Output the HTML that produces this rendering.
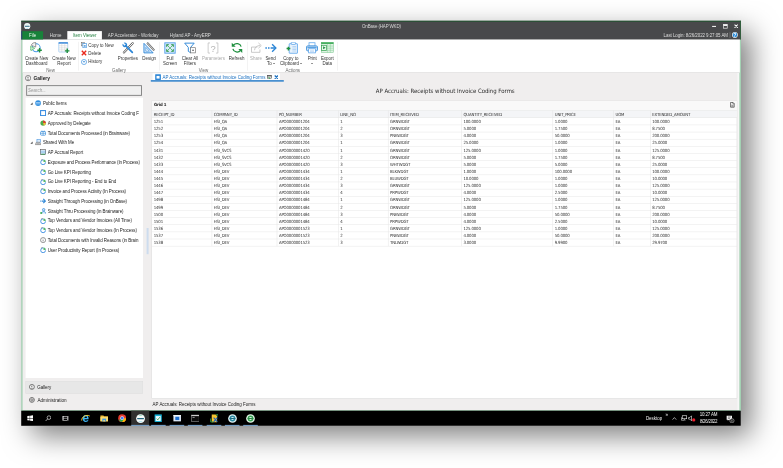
<!DOCTYPE html>
<html lang="en"><head><meta charset="utf-8"><title>OnBase (HAP WKD)</title>
<style>
html,body{margin:0;padding:0;}
body{width:783px;height:468px;background:#fff;overflow:hidden;position:relative;font-family:"Liberation Sans",sans-serif;}
div,svg{position:absolute;box-sizing:border-box;}
.t{white-space:nowrap;}
</style></head><body>

<div style="left:21px;top:21px;width:720px;height:405px;background:#f0eeee;box-shadow:9.5px 9.5px 27px rgba(0,0,0,.52);"></div>
<svg style="left:0;top:0" width="783" height="468" viewBox="0 0 783 468"><rect x="21.70" y="21.30" width="718.60" height="389.20" fill="#f0eeee" stroke="#a9d2b6" stroke-width="1.0"/><rect x="21.20" y="20.80" width="1.40" height="389.90" fill="#aed4bb"/><rect x="737.50" y="72.80" width="2.00" height="337.30" fill="#f7f7f7"/><rect x="739.45" y="20.80" width="1.35" height="389.90" fill="#9fd0b0"/><rect x="22.70" y="38.00" width="717.10" height="34.70" fill="#fff"/><rect x="22.70" y="72.30" width="717.10" height="0.50" fill="#d2d2d2"/><rect x="21.20" y="20.80" width="719.60" height="18.65" fill="#48494b"/><rect x="21.20" y="20.80" width="719.60" height="0.90" fill="#22552f"/><rect x="740.00" y="20.80" width="0.80" height="18.65" fill="#2a5c36"/><rect x="22.20" y="31.20" width="20.85" height="8.25" fill="#18823a"/><rect x="21.20" y="31.20" width="1.00" height="8.25" fill="#2b4a78"/><rect x="67.30" y="31.10" width="34.60" height="8.60" fill="#fff"/><rect x="729.70" y="32.20" width="0.60" height="5.70" fill="#8c8c8c"/><rect x="712.10" y="25.90" width="3.90" height="1.00" fill="#fff"/><rect x="78.45" y="41.80" width="0.50" height="28.80" fill="#e6e6e6"/><rect x="159.35" y="41.80" width="0.50" height="28.80" fill="#e6e6e6"/><rect x="247.25" y="41.80" width="0.50" height="28.80" fill="#e6e6e6"/><rect x="337.05" y="41.80" width="0.50" height="28.80" fill="#e6e6e6"/><rect x="26.65" y="85.65" width="114.80" height="9.70" fill="#f0f0f0" stroke="#7d7d7d" stroke-width="0.9"/><rect x="25.60" y="97.70" width="117.40" height="280.30" fill="#fff"/><rect x="146.60" y="228.00" width="2.00" height="26.20" fill="#cddcee"/><rect x="25.75" y="381.45" width="117.00" height="12.00" fill="#e7e7e7" stroke="#dcdcdc" stroke-width="0.5"/><rect x="152.60" y="73.40" width="127.40" height="7.00" fill="#fff"/><rect x="150.80" y="80.20" width="133.00" height="1.40" fill="#1f78c8"/><rect x="151.75" y="100.85" width="585.20" height="297.50" fill="#fff" stroke="#d9d9d9" stroke-width="0.5"/><rect x="151.80" y="100.90" width="585.10" height="9.50" fill="#f9f9f9"/><rect x="151.80" y="110.40" width="585.10" height="7.30" fill="#f4f5f7"/><rect x="151.80" y="110.20" width="585.10" height="0.40" fill="#e2e2e2"/><rect x="151.80" y="117.50" width="585.10" height="0.40" fill="#dedede"/><rect x="211.65" y="110.40" width="0.50" height="135.74" fill="#e4e4e4"/><rect x="276.75" y="110.40" width="0.50" height="135.74" fill="#e4e4e4"/><rect x="338.15" y="110.40" width="0.50" height="135.74" fill="#e4e4e4"/><rect x="387.95" y="110.40" width="0.50" height="135.74" fill="#e4e4e4"/><rect x="461.25" y="110.40" width="0.50" height="135.74" fill="#e4e4e4"/><rect x="552.55" y="110.40" width="0.50" height="135.74" fill="#e4e4e4"/><rect x="613.35" y="110.40" width="0.50" height="135.74" fill="#e4e4e4"/><rect x="650.05" y="110.40" width="0.50" height="135.74" fill="#e4e4e4"/><rect x="151.80" y="124.68" width="585.10" height="0.50" fill="#e6e6e6"/><rect x="151.80" y="131.81" width="585.10" height="0.50" fill="#e6e6e6"/><rect x="151.80" y="138.94" width="585.10" height="0.50" fill="#e6e6e6"/><rect x="151.80" y="146.07" width="585.10" height="0.50" fill="#e6e6e6"/><rect x="151.80" y="153.20" width="585.10" height="0.50" fill="#e6e6e6"/><rect x="151.80" y="160.33" width="585.10" height="0.50" fill="#e6e6e6"/><rect x="151.80" y="167.46" width="585.10" height="0.50" fill="#e6e6e6"/><rect x="151.80" y="174.59" width="585.10" height="0.50" fill="#e6e6e6"/><rect x="151.80" y="181.72" width="585.10" height="0.50" fill="#e6e6e6"/><rect x="151.80" y="188.85" width="585.10" height="0.50" fill="#e6e6e6"/><rect x="151.80" y="195.98" width="585.10" height="0.50" fill="#e6e6e6"/><rect x="151.80" y="203.11" width="585.10" height="0.50" fill="#e6e6e6"/><rect x="151.80" y="210.24" width="585.10" height="0.50" fill="#e6e6e6"/><rect x="151.80" y="217.37" width="585.10" height="0.50" fill="#e6e6e6"/><rect x="151.80" y="224.50" width="585.10" height="0.50" fill="#e6e6e6"/><rect x="151.80" y="231.63" width="585.10" height="0.50" fill="#e6e6e6"/><rect x="151.80" y="238.76" width="585.10" height="0.50" fill="#e6e6e6"/><rect x="151.80" y="245.89" width="585.10" height="0.50" fill="#e6e6e6"/><rect x="21.20" y="410.70" width="719.60" height="15.10" fill="#000"/><rect x="131.20" y="410.70" width="18.00" height="15.10" fill="#303030"/><rect x="131.20" y="424.90" width="18.00" height="0.90" fill="#86b7e6"/><rect x="151.10" y="424.90" width="14.60" height="0.90" fill="#86b7e6"/><rect x="169.60" y="424.90" width="14.60" height="0.90" fill="#86b7e6"/><rect x="187.80" y="424.90" width="14.60" height="0.90" fill="#86b7e6"/><rect x="206.70" y="424.90" width="14.60" height="0.90" fill="#86b7e6"/><rect x="224.90" y="424.90" width="14.60" height="0.90" fill="#86b7e6"/><rect x="243.20" y="424.90" width="14.60" height="0.90" fill="#86b7e6"/></svg>
<div id="fg" style="left:0;top:0;width:783px;height:468px;will-change:transform;">
<svg style="left:24.20px;top:23.10px;" width="6.40" height="6.40" viewBox="0 0 20 20"><circle cx="10" cy="10" r="9.700" fill="#f6fbfb"/><path d="M5 4.200a7.500 7.500 0 0 1 10 0z" fill="#9fdcc0"/><path d="M5 15.800a7.500 7.500 0 0 0 10 0z" fill="#9fdde8"/><rect x="2.500" y="8.600" width="15" height="2.900" rx="0.800" fill="#25657e"/></svg>
<div class="t " style="top:33px;font-size:4.45px;line-height:5px;color:#e9f4ec;left:-67.40px;width:200px;text-align:center;">File</div>
<div class="t " style="top:33px;font-size:4.45px;line-height:5px;color:#dcdcdc;left:-44.40px;width:200px;text-align:center;">Home</div>
<div class="t " style="top:33px;font-size:4.45px;line-height:5px;color:#1e7e3c;left:-15.20px;width:200px;text-align:center;">Item Viewer</div>
<div class="t " style="top:33px;font-size:4.45px;line-height:5px;color:#dcdcdc;letter-spacing:-0.004px;left:107.80px;">AP Accelerator - Workday</div>
<div class="t " style="top:33px;font-size:4.45px;line-height:5px;color:#dcdcdc;left:169.70px;">Hyland AP - AnyERP</div>
<div class="t " style="top:24px;font-size:4.45px;line-height:5px;color:#d6d6d6;letter-spacing:-0.123px;left:362.00px;">OnBase (HAP WKD)</div>
<div class="t " style="top:33px;font-size:4.45px;line-height:5px;color:#dedede;letter-spacing:-0.064px;left:663.60px;">Last Login: 8/26/2022 9:27:05 AM</div>
<svg style="left:731.90px;top:32.30px;" width="5.80" height="5.80" viewBox="0 0 16 16"><circle cx="8" cy="8" r="7.800" fill="#fff"/><circle cx="8" cy="8" r="6.300" fill="#1f86d8"/><text x="8" y="12.800" font-size="14" font-weight="bold" fill="#fff" text-anchor="middle" font-family="Liberation Sans,sans-serif">?</text></svg>
<svg style="left:723.10px;top:24.10px;" width="4.70" height="4.60" viewBox="0 0 12 12"><rect x="1" y="1" width="10" height="10" fill="none" stroke="#e8e8e8" stroke-width="1.800"/><rect x="1" y="1" width="10" height="4" fill="#fff"/></svg>
<svg style="left:733.90px;top:24.10px;" width="4.40" height="4.40" viewBox="0 0 12 12"><path d="M1.500 1.500 10.500 10.500M10.500 1.500 1.500 10.500" stroke="#fff" stroke-width="2.800"/></svg>
<div class="t " style="top:56px;font-size:4.45px;line-height:5px;color:#333;left:-63.40px;width:200px;text-align:center;">Create New</div>
<div class="t " style="top:61px;font-size:4.45px;line-height:5px;color:#333;left:-63.40px;width:200px;text-align:center;">Dashboard</div>
<div class="t " style="top:56px;font-size:4.45px;line-height:5px;color:#333;left:-36.00px;width:200px;text-align:center;">Create New</div>
<div class="t " style="top:61px;font-size:4.45px;line-height:5px;color:#333;left:-36.00px;width:200px;text-align:center;">Report</div>
<div class="t " style="top:68px;font-size:4.45px;line-height:5px;color:#6a6a6a;left:-49.40px;width:200px;text-align:center;">New</div>
<div class="t " style="top:43px;font-size:4.45px;line-height:5px;color:#333;left:88.30px;">Copy to New</div>
<div class="t " style="top:51px;font-size:4.45px;line-height:5px;color:#333;left:88.30px;">Delete</div>
<div class="t " style="top:59px;font-size:4.45px;line-height:5px;color:#333;left:88.30px;">History</div>
<div class="t " style="top:56px;font-size:4.45px;line-height:5px;color:#333;left:27.90px;width:200px;text-align:center;">Properties</div>
<div class="t " style="top:56px;font-size:4.45px;line-height:5px;color:#333;left:49.20px;width:200px;text-align:center;">Design</div>
<div class="t " style="top:68px;font-size:4.45px;line-height:5px;color:#6a6a6a;left:19.00px;width:200px;text-align:center;">Gallery</div>
<div class="t " style="top:56px;font-size:4.45px;line-height:5px;color:#333;left:70.00px;width:200px;text-align:center;">Full</div>
<div class="t " style="top:61px;font-size:4.45px;line-height:5px;color:#333;left:70.00px;width:200px;text-align:center;">Screen</div>
<div class="t " style="top:56px;font-size:4.45px;line-height:5px;color:#333;left:89.90px;width:200px;text-align:center;">Clear All</div>
<div class="t " style="top:61px;font-size:4.45px;line-height:5px;color:#333;left:89.90px;width:200px;text-align:center;">Filters</div>
<div class="t " style="top:56px;font-size:4.45px;line-height:5px;color:#a9a9a9;left:113.40px;width:200px;text-align:center;">Parameters</div>
<div class="t " style="top:56px;font-size:4.45px;line-height:5px;color:#333;left:136.60px;width:200px;text-align:center;">Refresh</div>
<div class="t " style="top:68px;font-size:4.45px;line-height:5px;color:#6a6a6a;left:103.50px;width:200px;text-align:center;">View</div>
<div class="t " style="top:56px;font-size:4.45px;line-height:5px;color:#a9a9a9;left:156.00px;width:200px;text-align:center;">Share</div>
<div class="t " style="top:56px;font-size:4.45px;line-height:5px;color:#333;left:170.60px;width:200px;text-align:center;">Send</div>
<div class="t " style="top:61px;font-size:4.45px;line-height:5px;color:#333;left:169.30px;width:200px;text-align:center;">To</div>
<svg style="left:272.55px;top:63.00px;" width="2.00" height="1.30" viewBox="0 0 8 5"><path d="M0 0h8L4 5z" fill="#555"/></svg>
<div class="t " style="top:56px;font-size:4.45px;line-height:5px;color:#333;left:190.80px;width:200px;text-align:center;">Copy to</div>
<div class="t " style="top:61px;font-size:4.45px;line-height:5px;color:#333;left:189.50px;width:200px;text-align:center;">Clipboard</div>
<svg style="left:299.92px;top:63.00px;" width="2.00" height="1.30" viewBox="0 0 8 5"><path d="M0 0h8L4 5z" fill="#555"/></svg>
<div class="t " style="top:56px;font-size:4.45px;line-height:5px;color:#333;left:212.20px;width:200px;text-align:center;">Print</div>
<svg style="left:311.20px;top:63.00px;" width="2.00" height="1.30" viewBox="0 0 8 5"><path d="M0 0h8L4 5z" fill="#555"/></svg>
<div class="t " style="top:56px;font-size:4.45px;line-height:5px;color:#333;left:227.30px;width:200px;text-align:center;">Export</div>
<div class="t " style="top:61px;font-size:4.45px;line-height:5px;color:#333;left:227.30px;width:200px;text-align:center;">Data</div>
<div class="t " style="top:68px;font-size:4.45px;line-height:5px;color:#6a6a6a;left:192.80px;width:200px;text-align:center;">Actions</div>
<svg style="left:30.30px;top:42.20px;" width="12.00" height="12.00" viewBox="0 0 32 32"><circle cx="16.500" cy="15.500" r="10.600" fill="#fff" stroke="#4a9ae6" stroke-width="2.800"/><path d="M15.200 13.500V1.200A12.500 12.500 0 0 0 3 8.500z" fill="#f3f3f3" stroke="#6a6a6a" stroke-width="1.700" stroke-linejoin="round"/><path d="M13 16.500 1.200 11.500A12.500 12.500 0 0 0 2.600 23z" fill="#bfe8c6" stroke="#4bb165" stroke-width="1.600" stroke-linejoin="round"/><path d="M25.6 16v12M19.6 22h12" stroke="#1f8f3f" stroke-width="3.8"/></svg>
<svg style="left:58.00px;top:42.20px;" width="12.00" height="12.00" viewBox="0 0 32 32"><rect x="2" y="1.2" width="24" height="25.5" rx="1.5" fill="#fff" stroke="#8fc1f0" stroke-width="1.7"/><rect x="1.6" y="0.8" width="24.8" height="3.6" fill="#2b7fd6"/><path d="M10 4.4v22M18 4.4v22M2 10h24M2 15.500h24M2 21h24" stroke="#c9c9c9" stroke-width="1.1"/><path d="M24.6 17.6v12M18.6 23.6h12" stroke="#1f8f3f" stroke-width="3.8"/></svg>
<svg style="left:81.00px;top:42.30px;" width="6.00" height="6.00" viewBox="0 0 16 16"><rect x="0.8" y="0.8" width="8.5" height="9.500" fill="#fff" stroke="#5a5a5a" stroke-width="1.3"/><path d="M2.500 3.500h5M2.500 6h3" stroke="#777" stroke-width="1"/><rect x="5" y="4.500" width="10" height="10.800" fill="#fff" stroke="#3a8fe0" stroke-width="1.6"/><rect x="7.400" y="8.800" width="5" height="3.400" fill="#2b85d6"/></svg>
<svg style="left:81.00px;top:50.40px;" width="6.00" height="6.00" viewBox="0 0 16 16"><path d="M2.200 2.200 13.800 13.800M13.800 2.200 2.200 13.800" stroke="#ea2a1e" stroke-width="3.800"/></svg>
<svg style="left:81.00px;top:58.60px;" width="6.00" height="6.00" viewBox="0 0 16 16"><circle cx="8" cy="8" r="6.800" fill="#fff" stroke="#3a8fe0" stroke-width="1.800"/><path d="M4.800 6h6.400L8 10.200z" fill="#2b85d6"/></svg>
<svg style="left:121.90px;top:42.20px;" width="12.00" height="12.00" viewBox="0 0 32 32"><path d="M28.500 3.500 5 28" stroke="#5a5a5a" stroke-width="5.400" stroke-linecap="round"/><path d="M28.500 3.500 5 28" stroke="#fff" stroke-width="2.600" stroke-linecap="round"/><path d="M9 9 27.500 27.500" stroke="#2b85d6" stroke-width="4.600" stroke-linecap="round"/><circle cx="7.500" cy="7.500" r="4.600" fill="none" stroke="#2b85d6" stroke-width="3.400"/><path d="M6.500 6.500 1 1" stroke="#fff" stroke-width="3.400"/></svg>
<svg style="left:143.20px;top:42.20px;" width="12.00" height="12.00" viewBox="0 0 32 32"><path d="M2.500 29V3.500L27 29z" fill="#d4e8fa" stroke="#2b85d6" stroke-width="2.400" stroke-linejoin="round"/><path d="M7.500 24.500v-10l9.500 10z" fill="#fff" stroke="#2b85d6" stroke-width="1.600"/><path d="M11 2 30 22.500" stroke="#6a6a6a" stroke-width="5.200"/><path d="M11.500 2.500 29.500 22" stroke="#e9e9e9" stroke-width="2.400"/><path d="M11.500 2.500 29.500 22" stroke="#8a8a8a" stroke-width="0.800"/></svg>
<svg style="left:164.00px;top:42.20px;" width="12.00" height="12.00" viewBox="0 0 32 32"><rect x="2.200" y="2.200" width="27.600" height="27.600" fill="#dcecfb" stroke="#5aa3ea" stroke-width="2.600"/><path d="M6 6h8l-8 8z" fill="#1f8f3f"/><path d="M8.5 8.5l7 7" stroke="#5cb774" stroke-width="2.600"/><path d="M26 6h-8l8 8z" fill="#1f8f3f"/><path d="M23.5 8.5l-7 7" stroke="#5cb774" stroke-width="2.600"/><path d="M6 26h8l-8 -8z" fill="#1f8f3f"/><path d="M8.5 23.5l7 -7" stroke="#5cb774" stroke-width="2.600"/><path d="M26 26h-8l8 -8z" fill="#1f8f3f"/><path d="M23.5 23.5l-7 -7" stroke="#5cb774" stroke-width="2.600"/></svg>
<svg style="left:183.90px;top:42.20px;" width="12.00" height="12.00" viewBox="0 0 32 32"><path d="M1.800 3h25.400L17.500 14.500v14l-6-3.600V14.500z" fill="#fff" stroke="#2b85d6" stroke-width="2.500" stroke-linejoin="round"/><rect x="17" y="15.200" width="14" height="13.800" fill="#fff" stroke="#6a6a6a" stroke-width="1.700"/><rect x="22.300" y="20.400" width="3.600" height="3.600" fill="#555"/></svg>
<svg style="left:207.40px;top:42.20px;" width="12.00" height="12.00" viewBox="0 0 32 32"><path d="M8 2.500H3v27h5M24 2.500h5v27h-5" fill="none" stroke="#bdbdbd" stroke-width="2"/><text x="16" y="25.500" font-size="25" fill="#b4b4b4" text-anchor="middle" font-family="Liberation Sans,sans-serif">?</text></svg>
<svg style="left:230.70px;top:42.20px;" width="12.00" height="12.00" viewBox="0 0 32 32"><path d="M27 12.500A11.500 10.500 0 0 0 6.500 8.500" fill="none" stroke="#1f8f3f" stroke-width="3.400"/><path d="M5 18.500A11.500 10.500 0 0 0 25.500 22.500" fill="none" stroke="#1f8f3f" stroke-width="3.400"/><path d="M2 2v10.500h10.500z" fill="#1f8f3f"/><path d="M30 29V18.500H19.500z" fill="#1f8f3f"/></svg>
<svg style="left:250.00px;top:42.20px;" width="12.00" height="12.00" viewBox="0 0 32 32"><path d="M19.500 13.500H4v14h22.500V20" fill="none" stroke="#bcbcbc" stroke-width="2.100"/><path d="M12 22c1-9 7-12.500 15-12.500" fill="none" stroke="#bcbcbc" stroke-width="2.100"/><path d="M22.500 2.500l7.500 7-7.500 7" fill="none" stroke="#bcbcbc" stroke-width="2.100"/></svg>
<svg style="left:264.60px;top:42.20px;" width="12.00" height="12.00" viewBox="0 0 32 32"><path d="M1 16h4M8 16h4M15 16h14" stroke="#2b85d6" stroke-width="3.400"/><path d="M19 6l10 10-10 10" fill="none" stroke="#2b85d6" stroke-width="3.600"/></svg>
<svg style="left:285.60px;top:42.20px;" width="12.00" height="12.00" viewBox="0 0 32 32"><rect x="8.500" y="4.500" width="22" height="25.500" rx="1" fill="#e8f2fc" stroke="#5aa3ea" stroke-width="2.200"/><rect x="14" y="0.500" width="11" height="6" rx="1.500" fill="#fff" stroke="#5aa3ea" stroke-width="2"/><path d="M17 12h10M17 16h10M17 20h10M17 24h10" stroke="#7fb6ee" stroke-width="1.300"/><path d="M6.5 12.5v10M1.5 17.5h10" stroke="#1f8f3f" stroke-width="3.8"/></svg>
<svg style="left:306.20px;top:42.20px;" width="12.00" height="12.00" viewBox="0 0 32 32"><rect x="8" y="2" width="16" height="9" fill="#fff" stroke="#5aa3ea" stroke-width="2"/><rect x="1.500" y="10.500" width="29" height="13" rx="2.500" fill="#cfe3f8" stroke="#2b85d6" stroke-width="2.200"/><rect x="7" y="18" width="18" height="11" fill="#fff" stroke="#5aa3ea" stroke-width="2"/><path d="M10.500 22h11M10.500 25.500h11" stroke="#7fb6ee" stroke-width="1.200"/><path d="M4 14.500h24" stroke="#2b85d6" stroke-width="2"/></svg>
<svg style="left:321.40px;top:42.20px;" width="12.40" height="12.40" viewBox="0 0 32 32"><rect x="0.800" y="1.500" width="31" height="25.500" fill="#dff3e3" stroke="#7cc890" stroke-width="1.400"/><rect x="0.400" y="1" width="31.800" height="3.800" fill="#2ea34b"/><path d="M16.500 5v22M24 5v22M1 10.500h31M1 16h31M1 21.500h31" stroke="#7cc890" stroke-width="1.200"/><rect x="1.500" y="8.500" width="12.500" height="13" fill="#e9f7ec" stroke="#2f9c4c" stroke-width="1.700"/><path d="M5.500 11v8l6.500-4z" fill="#1f8f3f"/></svg>
<svg style="left:25.30px;top:75.40px;" width="6.20" height="6.20" viewBox="0 0 16 16"><circle cx="8" cy="8" r="6.8" fill="#f6f6f6" stroke="#555" stroke-width="1.7"/><path d="M8 4v5M6 12h4M6.500 7H8" stroke="#444" stroke-width="1.5" fill="none"/></svg>
<div class="t " style="top:76px;font-size:4.9px;line-height:5px;color:#222;font-weight:bold;left:33.40px;">Gallery</div>
<div class="t " style="top:88px;font-size:4.45px;line-height:5px;color:#999;font-style:italic;left:28.10px;">Search...</div>
<div style="left:0;top:0;width:140.2px;height:380px;overflow:hidden">
<svg style="left:29.50px;top:101.85px;" width="3.00" height="3.00" viewBox="0 0 8 8"><path d="M7 1v6H1z" fill="#444"/></svg>
<svg style="left:34.80px;top:100.35px;" width="6.20" height="6.20" viewBox="0 0 16 16"><circle cx="8" cy="8" r="7.5" fill="#2f8ee0"/><path d="M2 6.500h12M2 10h12" stroke="#cfe6fa" stroke-width="1.6"/></svg>
<div class="t " style="top:101px;font-size:4.45px;line-height:5px;color:#222;letter-spacing:-0.04px;left:42.90px;">Public Items</div>
<svg style="left:39.70px;top:110.30px;" width="6.20" height="6.20" viewBox="0 0 16 16"><rect x="1.500" y="1.500" width="13" height="13" fill="#fff" stroke="#3a8de2" stroke-width="2.8"/></svg>
<div class="t " style="top:111px;font-size:4.45px;line-height:5px;color:#222;letter-spacing:-0.045px;left:47.70px;">AP Accruals: Receipts without Invoice Coding F</div>
<svg style="left:39.70px;top:120.05px;" width="6.20" height="6.20" viewBox="0 0 16 16"><circle cx="8" cy="8" r="7" fill="#4aa84f"/><path d="M8 8V1a7 7 0 0 1 7 7z" fill="#e23c2e"/><path d="M8 8h7a7 7 0 0 1-5 6.700z" fill="#f2c035"/><path d="M8 8 3 3" stroke="#6b4" stroke-width="1"/></svg>
<div class="t " style="top:121px;font-size:4.45px;line-height:5px;color:#222;letter-spacing:-0.045px;left:47.70px;">Approved by Delegate</div>
<svg style="left:39.70px;top:129.81px;" width="6.20" height="6.20" viewBox="0 0 16 16"><rect x="1.500" y="4" width="13" height="9.500" rx="2" fill="#fff" stroke="#2b85d6" stroke-width="1.8"/><path d="M1.500 8.500h13M8 4v9.500M5 1.500v3M11 1.500v3" stroke="#2b85d6" stroke-width="1.5"/></svg>
<div class="t " style="top:131px;font-size:4.45px;line-height:5px;color:#222;letter-spacing:-0.045px;left:47.70px;">Total Documents Processed (in Brainware)</div>
<svg style="left:29.50px;top:140.86px;" width="3.00" height="3.00" viewBox="0 0 8 8"><path d="M7 1v6H1z" fill="#444"/></svg>
<svg style="left:34.80px;top:139.36px;" width="6.20" height="6.20" viewBox="0 0 16 16"><rect x="5" y="1" width="9" height="7.500" fill="#dcebfa" stroke="#4a96e0" stroke-width="1.500"/><path d="M1 14.500l2.500-6h9l2.500 6z" fill="#f2f2f2" stroke="#555" stroke-width="1.400"/><path d="M4 12h8" stroke="#555" stroke-width="1.200"/></svg>
<div class="t " style="top:140px;font-size:4.45px;line-height:5px;color:#222;letter-spacing:-0.04px;left:42.90px;">Shared With Me</div>
<svg style="left:39.70px;top:149.31px;" width="6.20" height="6.20" viewBox="0 0 16 16"><rect x="1.500" y="1.500" width="13" height="13" fill="#fff" stroke="#555" stroke-width="1.6"/><path d="M1.500 5.500h13M1.500 10h13" stroke="#2b85d6" stroke-width="1.6"/><path d="M3 13.500h10" stroke="#2a9a48" stroke-width="2"/></svg>
<div class="t " style="top:150px;font-size:4.45px;line-height:5px;color:#222;letter-spacing:-0.045px;left:47.70px;">AP Accrual Report</div>
<svg style="left:39.70px;top:159.06px;" width="6.20" height="6.20" viewBox="0 0 16 16"><circle cx="8" cy="8.500" r="6.200" fill="#fff" stroke="#3a8de2" stroke-width="2.300"/><path d="M8.600 8V1.200A6.800 6.800 0 0 1 15.400 8z" fill="#3fae55" stroke="#fff" stroke-width="0.900"/><path d="M2.600 3.400A7.500 7.500 0 0 1 7 1" stroke="#777" stroke-width="1.700" fill="none"/></svg>
<div class="t " style="top:160px;font-size:4.45px;line-height:5px;color:#222;letter-spacing:-0.095px;left:47.70px;">Exposure and Process Performance (In Process)</div>
<svg style="left:39.70px;top:168.81px;" width="6.20" height="6.20" viewBox="0 0 16 16"><circle cx="8" cy="8.500" r="6.200" fill="#fff" stroke="#3a8de2" stroke-width="2.300"/><path d="M8.600 8V1.200A6.800 6.800 0 0 1 15.400 8z" fill="#3fae55" stroke="#fff" stroke-width="0.900"/><path d="M2.600 3.400A7.500 7.500 0 0 1 7 1" stroke="#777" stroke-width="1.700" fill="none"/></svg>
<div class="t " style="top:170px;font-size:4.45px;line-height:5px;color:#222;letter-spacing:-0.045px;left:47.70px;">Go Live KPI Reporting</div>
<svg style="left:39.70px;top:178.57px;" width="6.20" height="6.20" viewBox="0 0 16 16"><circle cx="8" cy="8.500" r="6.200" fill="#fff" stroke="#3a8de2" stroke-width="2.300"/><path d="M8.600 8V1.200A6.800 6.800 0 0 1 15.400 8z" fill="#3fae55" stroke="#fff" stroke-width="0.900"/><path d="M2.600 3.400A7.500 7.500 0 0 1 7 1" stroke="#777" stroke-width="1.700" fill="none"/></svg>
<div class="t " style="top:179px;font-size:4.45px;line-height:5px;color:#222;letter-spacing:-0.045px;left:47.70px;">Go Live KPI Reporting - End to End</div>
<svg style="left:39.70px;top:188.32px;" width="6.20" height="6.20" viewBox="0 0 16 16"><circle cx="8" cy="8.500" r="6.200" fill="#fff" stroke="#3a8de2" stroke-width="2.300"/><path d="M8.600 8V1.200A6.800 6.800 0 0 1 15.400 8z" fill="#3fae55" stroke="#fff" stroke-width="0.900"/><path d="M2.600 3.400A7.500 7.500 0 0 1 7 1" stroke="#777" stroke-width="1.700" fill="none"/></svg>
<div class="t " style="top:189px;font-size:4.45px;line-height:5px;color:#222;letter-spacing:-0.045px;left:47.70px;">Invoice and Process Activity (In Process)</div>
<svg style="left:39.70px;top:198.07px;" width="6.20" height="6.20" viewBox="0 0 16 16"><path d="M1 8h2.500M5 8H13" stroke="#2b85d6" stroke-width="2.800"/><path d="M8.500 2.500l5.500 5.500-5.500 5.500" fill="none" stroke="#2b85d6" stroke-width="2.800"/></svg>
<div class="t " style="top:199px;font-size:4.45px;line-height:5px;color:#222;letter-spacing:-0.045px;left:47.70px;">Straight Through Processing (in OnBase)</div>
<svg style="left:39.70px;top:207.82px;" width="6.20" height="6.20" viewBox="0 0 16 16"><circle cx="9.500" cy="4.500" r="3.200" fill="#cfe4f8" stroke="#2b85d6" stroke-width="1.800"/><path d="M4.500 14.500c0-4 2-5.500 5-5.500s5 1.500 5 5.500" fill="#cfe4f8" stroke="#2b85d6" stroke-width="1.800"/><circle cx="3" cy="12.800" r="2.700" fill="#3fae55"/></svg>
<div class="t " style="top:209px;font-size:4.45px;line-height:5px;color:#222;letter-spacing:-0.045px;left:47.70px;">Straight Thru Processing (in Brainware)</div>
<svg style="left:39.70px;top:217.57px;" width="6.20" height="6.20" viewBox="0 0 16 16"><circle cx="8" cy="8.500" r="6.200" fill="#fff" stroke="#3a8de2" stroke-width="2.300"/><path d="M8.600 8V1.200A6.800 6.800 0 0 1 15.400 8z" fill="#3fae55" stroke="#fff" stroke-width="0.900"/><path d="M2.600 3.400A7.500 7.500 0 0 1 7 1" stroke="#777" stroke-width="1.700" fill="none"/></svg>
<div class="t " style="top:218px;font-size:4.45px;line-height:5px;color:#222;letter-spacing:-0.045px;left:47.70px;">Top Vendors and Vendor Invoices (All Time)</div>
<svg style="left:39.70px;top:227.33px;" width="6.20" height="6.20" viewBox="0 0 16 16"><circle cx="8" cy="8.500" r="6.200" fill="#fff" stroke="#3a8de2" stroke-width="2.300"/><path d="M8.600 8V1.200A6.800 6.800 0 0 1 15.400 8z" fill="#3fae55" stroke="#fff" stroke-width="0.900"/><path d="M2.600 3.400A7.500 7.500 0 0 1 7 1" stroke="#777" stroke-width="1.700" fill="none"/></svg>
<div class="t " style="top:228px;font-size:4.45px;line-height:5px;color:#222;letter-spacing:-0.045px;left:47.70px;">Top Vendors and Vendor Invoices (In Process)</div>
<svg style="left:39.70px;top:237.08px;" width="6.20" height="6.20" viewBox="0 0 16 16"><circle cx="8" cy="8" r="6.600" fill="#fff" stroke="#555" stroke-width="1.500"/><path d="M8 4.500v1.500M8 7.500v4" stroke="#555" stroke-width="1.600"/></svg>
<div class="t " style="top:238px;font-size:4.45px;line-height:5px;color:#222;letter-spacing:-0.045px;left:47.70px;">Total Documents with Invalid Reasons (in Brain</div>
<svg style="left:39.70px;top:246.83px;" width="6.20" height="6.20" viewBox="0 0 16 16"><circle cx="8" cy="8.500" r="6.200" fill="#fff" stroke="#3a8de2" stroke-width="2.300"/><path d="M8.600 8V1.200A6.800 6.800 0 0 1 15.400 8z" fill="#3fae55" stroke="#fff" stroke-width="0.900"/><path d="M2.600 3.400A7.500 7.500 0 0 1 7 1" stroke="#777" stroke-width="1.700" fill="none"/></svg>
<div class="t " style="top:248px;font-size:4.45px;line-height:5px;color:#222;letter-spacing:-0.045px;left:47.70px;">User Productivity Report (In Process)</div>
</div>
<svg style="left:29.20px;top:384.40px;" width="5.80" height="5.80" viewBox="0 0 16 16"><circle cx="8" cy="8" r="6.800" fill="#f4f4f4" stroke="#3c3c3c" stroke-width="1.800"/><path d="M8 4v5M6 12h4M6.500 7H8" stroke="#444" stroke-width="1.500" fill="none"/></svg>
<div class="t " style="top:385px;font-size:4.45px;line-height:5px;color:#222;left:37.20px;">Gallery</div>
<svg style="left:29.20px;top:397.20px;" width="5.80" height="5.80" viewBox="0 0 16 16"><circle cx="8" cy="8" r="6.800" fill="none" stroke="#3c3c3c" stroke-width="1.700"/><circle cx="8" cy="8" r="2.600" fill="none" stroke="#444" stroke-width="1.500"/><path d="M8 1.500v3M8 11.500v3M1.500 8h3M11.500 8h3" stroke="#444" stroke-width="1.400"/></svg>
<div class="t " style="top:398px;font-size:4.64px;line-height:5px;color:#222;left:37.40px;">Administration</div>
<svg style="left:154.50px;top:73.70px;" width="6.10" height="6.10" viewBox="0 0 16 16"><rect x="0.500" y="0.500" width="15" height="15" rx="1" fill="#2b85d6"/><rect x="4" y="5" width="8" height="7" fill="#fff"/></svg>
<div class="t " style="top:75px;font-size:4.45px;line-height:5px;color:#1a6fc0;letter-spacing:-0.007px;left:162.50px;">AP Accruals: Receipts without Invoice Coding Forms</div>
<svg style="left:266.90px;top:74.80px;" width="4.90" height="4.40" viewBox="0 0 12 11"><rect x="1" y="1" width="10" height="7" fill="#f4f4f4" stroke="#4a4a4a" stroke-width="1.500"/><rect x="1" y="1" width="10" height="2.400" fill="#4a4a4a"/><path d="M3 6.500h3.500V10" fill="none" stroke="#2a9a48" stroke-width="1.600"/></svg>
<svg style="left:273.80px;top:74.80px;" width="4.70" height="4.30" viewBox="0 0 10 10"><path d="M1.300 1.300 8.700 8.700M8.700 1.300 1.300 8.700" stroke="#1a6fc0" stroke-width="3"/></svg>
<div class="t " style="top:87px;font-size:5.97px;line-height:7px;color:#2a2a2a;font-family:'DejaVu Sans Condensed','DejaVu Sans',sans-serif;left:375.80px;">AP Accruals: Receipts without Invoice Coding Forms</div>
<div class="t " style="top:102px;font-size:4.3px;line-height:5px;color:#222;font-weight:bold;font-family:'DejaVu Sans Condensed','DejaVu Sans','Liberation Sans',sans-serif;letter-spacing:-0.14px;left:154.00px;">Grid 1</div>
<svg style="left:730.20px;top:102.20px;" width="4.80" height="5.60" viewBox="0 0 12 14"><path d="M1.500 1h6l3 3v9h-9z" fill="#fff" stroke="#333" stroke-width="1.700"/><path d="M7 1v3.500h3.500" fill="none" stroke="#333" stroke-width="1.200"/><path d="M3.500 8h5M3.500 10.500h5" stroke="#333" stroke-width="1.300"/></svg>
<div class="t " style="top:112px;font-size:4.3px;line-height:5px;color:#333;font-family:'DejaVu Sans Condensed','DejaVu Sans','Liberation Sans',sans-serif;letter-spacing:-0.14px;left:153.70px;">RECEIPT_ID</div>
<div class="t " style="top:112px;font-size:4.3px;line-height:5px;color:#333;font-family:'DejaVu Sans Condensed','DejaVu Sans','Liberation Sans',sans-serif;letter-spacing:-0.14px;left:213.80px;">COMPANY_ID</div>
<div class="t " style="top:112px;font-size:4.3px;line-height:5px;color:#333;font-family:'DejaVu Sans Condensed','DejaVu Sans','Liberation Sans',sans-serif;letter-spacing:-0.14px;left:278.90px;">PO_NUMBER</div>
<div class="t " style="top:112px;font-size:4.3px;line-height:5px;color:#333;font-family:'DejaVu Sans Condensed','DejaVu Sans','Liberation Sans',sans-serif;letter-spacing:-0.14px;left:340.30px;">LINE_NO</div>
<div class="t " style="top:112px;font-size:4.3px;line-height:5px;color:#333;font-family:'DejaVu Sans Condensed','DejaVu Sans','Liberation Sans',sans-serif;letter-spacing:-0.14px;left:390.10px;">ITEM_RECEIVED</div>
<div class="t " style="top:112px;font-size:4.3px;line-height:5px;color:#333;font-family:'DejaVu Sans Condensed','DejaVu Sans','Liberation Sans',sans-serif;letter-spacing:-0.14px;left:463.40px;">QUANTITY_RECEIVED</div>
<div class="t " style="top:112px;font-size:4.3px;line-height:5px;color:#333;font-family:'DejaVu Sans Condensed','DejaVu Sans','Liberation Sans',sans-serif;letter-spacing:-0.14px;left:554.70px;">UNIT_PRICE</div>
<div class="t " style="top:112px;font-size:4.3px;line-height:5px;color:#333;font-family:'DejaVu Sans Condensed','DejaVu Sans','Liberation Sans',sans-serif;letter-spacing:-0.14px;left:615.50px;">UOM</div>
<div class="t " style="top:112px;font-size:4.3px;line-height:5px;color:#333;font-family:'DejaVu Sans Condensed','DejaVu Sans','Liberation Sans',sans-serif;letter-spacing:-0.14px;left:652.20px;">EXTENDED_AMOUNT</div>
<div class="t " style="top:119px;font-size:4.3px;line-height:5px;color:#333;font-family:'DejaVu Sans Condensed','DejaVu Sans','Liberation Sans',sans-serif;letter-spacing:-0.14px;left:153.70px;">1251</div>
<div class="t " style="top:119px;font-size:4.3px;line-height:5px;color:#333;font-family:'DejaVu Sans Condensed','DejaVu Sans','Liberation Sans',sans-serif;letter-spacing:-0.14px;left:213.80px;">HSI_QA</div>
<div class="t " style="top:119px;font-size:4.3px;line-height:5px;color:#333;font-family:'DejaVu Sans Condensed','DejaVu Sans','Liberation Sans',sans-serif;letter-spacing:-0.14px;left:278.90px;">APO0000001204</div>
<div class="t " style="top:119px;font-size:4.3px;line-height:5px;color:#333;font-family:'DejaVu Sans Condensed','DejaVu Sans','Liberation Sans',sans-serif;letter-spacing:-0.14px;left:340.30px;">1</div>
<div class="t " style="top:119px;font-size:4.3px;line-height:5px;color:#333;font-family:'DejaVu Sans Condensed','DejaVu Sans','Liberation Sans',sans-serif;letter-spacing:-0.14px;left:390.10px;">GRNWDGT</div>
<div class="t " style="top:119px;font-size:4.3px;line-height:5px;color:#333;font-family:'DejaVu Sans Condensed','DejaVu Sans','Liberation Sans',sans-serif;letter-spacing:-0.14px;left:463.40px;">100.0000</div>
<div class="t " style="top:119px;font-size:4.3px;line-height:5px;color:#333;font-family:'DejaVu Sans Condensed','DejaVu Sans','Liberation Sans',sans-serif;letter-spacing:-0.14px;left:554.70px;">1.0000</div>
<div class="t " style="top:119px;font-size:4.3px;line-height:5px;color:#333;font-family:'DejaVu Sans Condensed','DejaVu Sans','Liberation Sans',sans-serif;letter-spacing:-0.14px;left:615.50px;">EA</div>
<div class="t " style="top:119px;font-size:4.3px;line-height:5px;color:#333;font-family:'DejaVu Sans Condensed','DejaVu Sans','Liberation Sans',sans-serif;letter-spacing:-0.14px;left:652.20px;">100.0000</div>
<div class="t " style="top:126px;font-size:4.3px;line-height:5px;color:#333;font-family:'DejaVu Sans Condensed','DejaVu Sans','Liberation Sans',sans-serif;letter-spacing:-0.14px;left:153.70px;">1252</div>
<div class="t " style="top:126px;font-size:4.3px;line-height:5px;color:#333;font-family:'DejaVu Sans Condensed','DejaVu Sans','Liberation Sans',sans-serif;letter-spacing:-0.14px;left:213.80px;">HSI_QA</div>
<div class="t " style="top:126px;font-size:4.3px;line-height:5px;color:#333;font-family:'DejaVu Sans Condensed','DejaVu Sans','Liberation Sans',sans-serif;letter-spacing:-0.14px;left:278.90px;">APO0000001204</div>
<div class="t " style="top:126px;font-size:4.3px;line-height:5px;color:#333;font-family:'DejaVu Sans Condensed','DejaVu Sans','Liberation Sans',sans-serif;letter-spacing:-0.14px;left:340.30px;">2</div>
<div class="t " style="top:126px;font-size:4.3px;line-height:5px;color:#333;font-family:'DejaVu Sans Condensed','DejaVu Sans','Liberation Sans',sans-serif;letter-spacing:-0.14px;left:390.10px;">ORNWDGT</div>
<div class="t " style="top:126px;font-size:4.3px;line-height:5px;color:#333;font-family:'DejaVu Sans Condensed','DejaVu Sans','Liberation Sans',sans-serif;letter-spacing:-0.14px;left:463.40px;">5.0000</div>
<div class="t " style="top:126px;font-size:4.3px;line-height:5px;color:#333;font-family:'DejaVu Sans Condensed','DejaVu Sans','Liberation Sans',sans-serif;letter-spacing:-0.14px;left:554.70px;">1.7500</div>
<div class="t " style="top:126px;font-size:4.3px;line-height:5px;color:#333;font-family:'DejaVu Sans Condensed','DejaVu Sans','Liberation Sans',sans-serif;letter-spacing:-0.14px;left:615.50px;">EA</div>
<div class="t " style="top:126px;font-size:4.3px;line-height:5px;color:#333;font-family:'DejaVu Sans Condensed','DejaVu Sans','Liberation Sans',sans-serif;letter-spacing:-0.14px;left:652.20px;">8.7500</div>
<div class="t " style="top:133px;font-size:4.3px;line-height:5px;color:#333;font-family:'DejaVu Sans Condensed','DejaVu Sans','Liberation Sans',sans-serif;letter-spacing:-0.14px;left:153.70px;">1253</div>
<div class="t " style="top:133px;font-size:4.3px;line-height:5px;color:#333;font-family:'DejaVu Sans Condensed','DejaVu Sans','Liberation Sans',sans-serif;letter-spacing:-0.14px;left:213.80px;">HSI_QA</div>
<div class="t " style="top:133px;font-size:4.3px;line-height:5px;color:#333;font-family:'DejaVu Sans Condensed','DejaVu Sans','Liberation Sans',sans-serif;letter-spacing:-0.14px;left:278.90px;">APO0000001204</div>
<div class="t " style="top:133px;font-size:4.3px;line-height:5px;color:#333;font-family:'DejaVu Sans Condensed','DejaVu Sans','Liberation Sans',sans-serif;letter-spacing:-0.14px;left:340.30px;">3</div>
<div class="t " style="top:133px;font-size:4.3px;line-height:5px;color:#333;font-family:'DejaVu Sans Condensed','DejaVu Sans','Liberation Sans',sans-serif;letter-spacing:-0.14px;left:390.10px;">PNKWDGT</div>
<div class="t " style="top:133px;font-size:4.3px;line-height:5px;color:#333;font-family:'DejaVu Sans Condensed','DejaVu Sans','Liberation Sans',sans-serif;letter-spacing:-0.14px;left:463.40px;">4.0000</div>
<div class="t " style="top:133px;font-size:4.3px;line-height:5px;color:#333;font-family:'DejaVu Sans Condensed','DejaVu Sans','Liberation Sans',sans-serif;letter-spacing:-0.14px;left:554.70px;">50.0000</div>
<div class="t " style="top:133px;font-size:4.3px;line-height:5px;color:#333;font-family:'DejaVu Sans Condensed','DejaVu Sans','Liberation Sans',sans-serif;letter-spacing:-0.14px;left:615.50px;">EA</div>
<div class="t " style="top:133px;font-size:4.3px;line-height:5px;color:#333;font-family:'DejaVu Sans Condensed','DejaVu Sans','Liberation Sans',sans-serif;letter-spacing:-0.14px;left:652.20px;">200.0000</div>
<div class="t " style="top:140px;font-size:4.3px;line-height:5px;color:#333;font-family:'DejaVu Sans Condensed','DejaVu Sans','Liberation Sans',sans-serif;letter-spacing:-0.14px;left:153.70px;">1254</div>
<div class="t " style="top:140px;font-size:4.3px;line-height:5px;color:#333;font-family:'DejaVu Sans Condensed','DejaVu Sans','Liberation Sans',sans-serif;letter-spacing:-0.14px;left:213.80px;">HSI_QA</div>
<div class="t " style="top:140px;font-size:4.3px;line-height:5px;color:#333;font-family:'DejaVu Sans Condensed','DejaVu Sans','Liberation Sans',sans-serif;letter-spacing:-0.14px;left:278.90px;">APO0000001204</div>
<div class="t " style="top:140px;font-size:4.3px;line-height:5px;color:#333;font-family:'DejaVu Sans Condensed','DejaVu Sans','Liberation Sans',sans-serif;letter-spacing:-0.14px;left:340.30px;">1</div>
<div class="t " style="top:140px;font-size:4.3px;line-height:5px;color:#333;font-family:'DejaVu Sans Condensed','DejaVu Sans','Liberation Sans',sans-serif;letter-spacing:-0.14px;left:390.10px;">GRNWDGT</div>
<div class="t " style="top:140px;font-size:4.3px;line-height:5px;color:#333;font-family:'DejaVu Sans Condensed','DejaVu Sans','Liberation Sans',sans-serif;letter-spacing:-0.14px;left:463.40px;">25.0000</div>
<div class="t " style="top:140px;font-size:4.3px;line-height:5px;color:#333;font-family:'DejaVu Sans Condensed','DejaVu Sans','Liberation Sans',sans-serif;letter-spacing:-0.14px;left:554.70px;">1.0000</div>
<div class="t " style="top:140px;font-size:4.3px;line-height:5px;color:#333;font-family:'DejaVu Sans Condensed','DejaVu Sans','Liberation Sans',sans-serif;letter-spacing:-0.14px;left:615.50px;">EA</div>
<div class="t " style="top:140px;font-size:4.3px;line-height:5px;color:#333;font-family:'DejaVu Sans Condensed','DejaVu Sans','Liberation Sans',sans-serif;letter-spacing:-0.14px;left:652.20px;">25.0000</div>
<div class="t " style="top:148px;font-size:4.3px;line-height:5px;color:#333;font-family:'DejaVu Sans Condensed','DejaVu Sans','Liberation Sans',sans-serif;letter-spacing:-0.14px;left:153.70px;">1431</div>
<div class="t " style="top:148px;font-size:4.3px;line-height:5px;color:#333;font-family:'DejaVu Sans Condensed','DejaVu Sans','Liberation Sans',sans-serif;letter-spacing:-0.14px;left:213.80px;">HSI_SVCS</div>
<div class="t " style="top:148px;font-size:4.3px;line-height:5px;color:#333;font-family:'DejaVu Sans Condensed','DejaVu Sans','Liberation Sans',sans-serif;letter-spacing:-0.14px;left:278.90px;">APO0000001420</div>
<div class="t " style="top:148px;font-size:4.3px;line-height:5px;color:#333;font-family:'DejaVu Sans Condensed','DejaVu Sans','Liberation Sans',sans-serif;letter-spacing:-0.14px;left:340.30px;">1</div>
<div class="t " style="top:148px;font-size:4.3px;line-height:5px;color:#333;font-family:'DejaVu Sans Condensed','DejaVu Sans','Liberation Sans',sans-serif;letter-spacing:-0.14px;left:390.10px;">GRNWDGT</div>
<div class="t " style="top:148px;font-size:4.3px;line-height:5px;color:#333;font-family:'DejaVu Sans Condensed','DejaVu Sans','Liberation Sans',sans-serif;letter-spacing:-0.14px;left:463.40px;">125.0000</div>
<div class="t " style="top:148px;font-size:4.3px;line-height:5px;color:#333;font-family:'DejaVu Sans Condensed','DejaVu Sans','Liberation Sans',sans-serif;letter-spacing:-0.14px;left:554.70px;">1.0000</div>
<div class="t " style="top:148px;font-size:4.3px;line-height:5px;color:#333;font-family:'DejaVu Sans Condensed','DejaVu Sans','Liberation Sans',sans-serif;letter-spacing:-0.14px;left:615.50px;">EA</div>
<div class="t " style="top:148px;font-size:4.3px;line-height:5px;color:#333;font-family:'DejaVu Sans Condensed','DejaVu Sans','Liberation Sans',sans-serif;letter-spacing:-0.14px;left:652.20px;">125.0000</div>
<div class="t " style="top:155px;font-size:4.3px;line-height:5px;color:#333;font-family:'DejaVu Sans Condensed','DejaVu Sans','Liberation Sans',sans-serif;letter-spacing:-0.14px;left:153.70px;">1432</div>
<div class="t " style="top:155px;font-size:4.3px;line-height:5px;color:#333;font-family:'DejaVu Sans Condensed','DejaVu Sans','Liberation Sans',sans-serif;letter-spacing:-0.14px;left:213.80px;">HSI_SVCS</div>
<div class="t " style="top:155px;font-size:4.3px;line-height:5px;color:#333;font-family:'DejaVu Sans Condensed','DejaVu Sans','Liberation Sans',sans-serif;letter-spacing:-0.14px;left:278.90px;">APO0000001420</div>
<div class="t " style="top:155px;font-size:4.3px;line-height:5px;color:#333;font-family:'DejaVu Sans Condensed','DejaVu Sans','Liberation Sans',sans-serif;letter-spacing:-0.14px;left:340.30px;">2</div>
<div class="t " style="top:155px;font-size:4.3px;line-height:5px;color:#333;font-family:'DejaVu Sans Condensed','DejaVu Sans','Liberation Sans',sans-serif;letter-spacing:-0.14px;left:390.10px;">ORNWDGT</div>
<div class="t " style="top:155px;font-size:4.3px;line-height:5px;color:#333;font-family:'DejaVu Sans Condensed','DejaVu Sans','Liberation Sans',sans-serif;letter-spacing:-0.14px;left:463.40px;">5.0000</div>
<div class="t " style="top:155px;font-size:4.3px;line-height:5px;color:#333;font-family:'DejaVu Sans Condensed','DejaVu Sans','Liberation Sans',sans-serif;letter-spacing:-0.14px;left:554.70px;">1.7500</div>
<div class="t " style="top:155px;font-size:4.3px;line-height:5px;color:#333;font-family:'DejaVu Sans Condensed','DejaVu Sans','Liberation Sans',sans-serif;letter-spacing:-0.14px;left:615.50px;">EA</div>
<div class="t " style="top:155px;font-size:4.3px;line-height:5px;color:#333;font-family:'DejaVu Sans Condensed','DejaVu Sans','Liberation Sans',sans-serif;letter-spacing:-0.14px;left:652.20px;">8.7500</div>
<div class="t " style="top:162px;font-size:4.3px;line-height:5px;color:#333;font-family:'DejaVu Sans Condensed','DejaVu Sans','Liberation Sans',sans-serif;letter-spacing:-0.14px;left:153.70px;">1433</div>
<div class="t " style="top:162px;font-size:4.3px;line-height:5px;color:#333;font-family:'DejaVu Sans Condensed','DejaVu Sans','Liberation Sans',sans-serif;letter-spacing:-0.14px;left:213.80px;">HSI_SVCS</div>
<div class="t " style="top:162px;font-size:4.3px;line-height:5px;color:#333;font-family:'DejaVu Sans Condensed','DejaVu Sans','Liberation Sans',sans-serif;letter-spacing:-0.14px;left:278.90px;">APO0000001420</div>
<div class="t " style="top:162px;font-size:4.3px;line-height:5px;color:#333;font-family:'DejaVu Sans Condensed','DejaVu Sans','Liberation Sans',sans-serif;letter-spacing:-0.14px;left:340.30px;">3</div>
<div class="t " style="top:162px;font-size:4.3px;line-height:5px;color:#333;font-family:'DejaVu Sans Condensed','DejaVu Sans','Liberation Sans',sans-serif;letter-spacing:-0.14px;left:390.10px;">WHTWDGT</div>
<div class="t " style="top:162px;font-size:4.3px;line-height:5px;color:#333;font-family:'DejaVu Sans Condensed','DejaVu Sans','Liberation Sans',sans-serif;letter-spacing:-0.14px;left:463.40px;">5.0000</div>
<div class="t " style="top:162px;font-size:4.3px;line-height:5px;color:#333;font-family:'DejaVu Sans Condensed','DejaVu Sans','Liberation Sans',sans-serif;letter-spacing:-0.14px;left:554.70px;">5.0000</div>
<div class="t " style="top:162px;font-size:4.3px;line-height:5px;color:#333;font-family:'DejaVu Sans Condensed','DejaVu Sans','Liberation Sans',sans-serif;letter-spacing:-0.14px;left:615.50px;">EA</div>
<div class="t " style="top:162px;font-size:4.3px;line-height:5px;color:#333;font-family:'DejaVu Sans Condensed','DejaVu Sans','Liberation Sans',sans-serif;letter-spacing:-0.14px;left:652.20px;">25.0000</div>
<div class="t " style="top:169px;font-size:4.3px;line-height:5px;color:#333;font-family:'DejaVu Sans Condensed','DejaVu Sans','Liberation Sans',sans-serif;letter-spacing:-0.14px;left:153.70px;">1444</div>
<div class="t " style="top:169px;font-size:4.3px;line-height:5px;color:#333;font-family:'DejaVu Sans Condensed','DejaVu Sans','Liberation Sans',sans-serif;letter-spacing:-0.14px;left:213.80px;">HSI_DEV</div>
<div class="t " style="top:169px;font-size:4.3px;line-height:5px;color:#333;font-family:'DejaVu Sans Condensed','DejaVu Sans','Liberation Sans',sans-serif;letter-spacing:-0.14px;left:278.90px;">APO0000001434</div>
<div class="t " style="top:169px;font-size:4.3px;line-height:5px;color:#333;font-family:'DejaVu Sans Condensed','DejaVu Sans','Liberation Sans',sans-serif;letter-spacing:-0.14px;left:340.30px;">1</div>
<div class="t " style="top:169px;font-size:4.3px;line-height:5px;color:#333;font-family:'DejaVu Sans Condensed','DejaVu Sans','Liberation Sans',sans-serif;letter-spacing:-0.14px;left:390.10px;">BLKWDGT</div>
<div class="t " style="top:169px;font-size:4.3px;line-height:5px;color:#333;font-family:'DejaVu Sans Condensed','DejaVu Sans','Liberation Sans',sans-serif;letter-spacing:-0.14px;left:463.40px;">1.0000</div>
<div class="t " style="top:169px;font-size:4.3px;line-height:5px;color:#333;font-family:'DejaVu Sans Condensed','DejaVu Sans','Liberation Sans',sans-serif;letter-spacing:-0.14px;left:554.70px;">100.0000</div>
<div class="t " style="top:169px;font-size:4.3px;line-height:5px;color:#333;font-family:'DejaVu Sans Condensed','DejaVu Sans','Liberation Sans',sans-serif;letter-spacing:-0.14px;left:615.50px;">EA</div>
<div class="t " style="top:169px;font-size:4.3px;line-height:5px;color:#333;font-family:'DejaVu Sans Condensed','DejaVu Sans','Liberation Sans',sans-serif;letter-spacing:-0.14px;left:652.20px;">100.0000</div>
<div class="t " style="top:176px;font-size:4.3px;line-height:5px;color:#333;font-family:'DejaVu Sans Condensed','DejaVu Sans','Liberation Sans',sans-serif;letter-spacing:-0.14px;left:153.70px;">1445</div>
<div class="t " style="top:176px;font-size:4.3px;line-height:5px;color:#333;font-family:'DejaVu Sans Condensed','DejaVu Sans','Liberation Sans',sans-serif;letter-spacing:-0.14px;left:213.80px;">HSI_DEV</div>
<div class="t " style="top:176px;font-size:4.3px;line-height:5px;color:#333;font-family:'DejaVu Sans Condensed','DejaVu Sans','Liberation Sans',sans-serif;letter-spacing:-0.14px;left:278.90px;">APO0000001434</div>
<div class="t " style="top:176px;font-size:4.3px;line-height:5px;color:#333;font-family:'DejaVu Sans Condensed','DejaVu Sans','Liberation Sans',sans-serif;letter-spacing:-0.14px;left:340.30px;">2</div>
<div class="t " style="top:176px;font-size:4.3px;line-height:5px;color:#333;font-family:'DejaVu Sans Condensed','DejaVu Sans','Liberation Sans',sans-serif;letter-spacing:-0.14px;left:390.10px;">BLUWDGT</div>
<div class="t " style="top:176px;font-size:4.3px;line-height:5px;color:#333;font-family:'DejaVu Sans Condensed','DejaVu Sans','Liberation Sans',sans-serif;letter-spacing:-0.14px;left:463.40px;">10.0000</div>
<div class="t " style="top:176px;font-size:4.3px;line-height:5px;color:#333;font-family:'DejaVu Sans Condensed','DejaVu Sans','Liberation Sans',sans-serif;letter-spacing:-0.14px;left:554.70px;">1.0000</div>
<div class="t " style="top:176px;font-size:4.3px;line-height:5px;color:#333;font-family:'DejaVu Sans Condensed','DejaVu Sans','Liberation Sans',sans-serif;letter-spacing:-0.14px;left:615.50px;">EA</div>
<div class="t " style="top:176px;font-size:4.3px;line-height:5px;color:#333;font-family:'DejaVu Sans Condensed','DejaVu Sans','Liberation Sans',sans-serif;letter-spacing:-0.14px;left:652.20px;">10.0000</div>
<div class="t " style="top:183px;font-size:4.3px;line-height:5px;color:#333;font-family:'DejaVu Sans Condensed','DejaVu Sans','Liberation Sans',sans-serif;letter-spacing:-0.14px;left:153.70px;">1446</div>
<div class="t " style="top:183px;font-size:4.3px;line-height:5px;color:#333;font-family:'DejaVu Sans Condensed','DejaVu Sans','Liberation Sans',sans-serif;letter-spacing:-0.14px;left:213.80px;">HSI_DEV</div>
<div class="t " style="top:183px;font-size:4.3px;line-height:5px;color:#333;font-family:'DejaVu Sans Condensed','DejaVu Sans','Liberation Sans',sans-serif;letter-spacing:-0.14px;left:278.90px;">APO0000001434</div>
<div class="t " style="top:183px;font-size:4.3px;line-height:5px;color:#333;font-family:'DejaVu Sans Condensed','DejaVu Sans','Liberation Sans',sans-serif;letter-spacing:-0.14px;left:340.30px;">3</div>
<div class="t " style="top:183px;font-size:4.3px;line-height:5px;color:#333;font-family:'DejaVu Sans Condensed','DejaVu Sans','Liberation Sans',sans-serif;letter-spacing:-0.14px;left:390.10px;">GRNWDGT</div>
<div class="t " style="top:183px;font-size:4.3px;line-height:5px;color:#333;font-family:'DejaVu Sans Condensed','DejaVu Sans','Liberation Sans',sans-serif;letter-spacing:-0.14px;left:463.40px;">125.0000</div>
<div class="t " style="top:183px;font-size:4.3px;line-height:5px;color:#333;font-family:'DejaVu Sans Condensed','DejaVu Sans','Liberation Sans',sans-serif;letter-spacing:-0.14px;left:554.70px;">1.0000</div>
<div class="t " style="top:183px;font-size:4.3px;line-height:5px;color:#333;font-family:'DejaVu Sans Condensed','DejaVu Sans','Liberation Sans',sans-serif;letter-spacing:-0.14px;left:615.50px;">EA</div>
<div class="t " style="top:183px;font-size:4.3px;line-height:5px;color:#333;font-family:'DejaVu Sans Condensed','DejaVu Sans','Liberation Sans',sans-serif;letter-spacing:-0.14px;left:652.20px;">125.0000</div>
<div class="t " style="top:190px;font-size:4.3px;line-height:5px;color:#333;font-family:'DejaVu Sans Condensed','DejaVu Sans','Liberation Sans',sans-serif;letter-spacing:-0.14px;left:153.70px;">1447</div>
<div class="t " style="top:190px;font-size:4.3px;line-height:5px;color:#333;font-family:'DejaVu Sans Condensed','DejaVu Sans','Liberation Sans',sans-serif;letter-spacing:-0.14px;left:213.80px;">HSI_DEV</div>
<div class="t " style="top:190px;font-size:4.3px;line-height:5px;color:#333;font-family:'DejaVu Sans Condensed','DejaVu Sans','Liberation Sans',sans-serif;letter-spacing:-0.14px;left:278.90px;">APO0000001434</div>
<div class="t " style="top:190px;font-size:4.3px;line-height:5px;color:#333;font-family:'DejaVu Sans Condensed','DejaVu Sans','Liberation Sans',sans-serif;letter-spacing:-0.14px;left:340.30px;">4</div>
<div class="t " style="top:190px;font-size:4.3px;line-height:5px;color:#333;font-family:'DejaVu Sans Condensed','DejaVu Sans','Liberation Sans',sans-serif;letter-spacing:-0.14px;left:390.10px;">PRPWDGT</div>
<div class="t " style="top:190px;font-size:4.3px;line-height:5px;color:#333;font-family:'DejaVu Sans Condensed','DejaVu Sans','Liberation Sans',sans-serif;letter-spacing:-0.14px;left:463.40px;">4.0000</div>
<div class="t " style="top:190px;font-size:4.3px;line-height:5px;color:#333;font-family:'DejaVu Sans Condensed','DejaVu Sans','Liberation Sans',sans-serif;letter-spacing:-0.14px;left:554.70px;">2.5000</div>
<div class="t " style="top:190px;font-size:4.3px;line-height:5px;color:#333;font-family:'DejaVu Sans Condensed','DejaVu Sans','Liberation Sans',sans-serif;letter-spacing:-0.14px;left:615.50px;">EA</div>
<div class="t " style="top:190px;font-size:4.3px;line-height:5px;color:#333;font-family:'DejaVu Sans Condensed','DejaVu Sans','Liberation Sans',sans-serif;letter-spacing:-0.14px;left:652.20px;">10.0000</div>
<div class="t " style="top:197px;font-size:4.3px;line-height:5px;color:#333;font-family:'DejaVu Sans Condensed','DejaVu Sans','Liberation Sans',sans-serif;letter-spacing:-0.14px;left:153.70px;">1498</div>
<div class="t " style="top:197px;font-size:4.3px;line-height:5px;color:#333;font-family:'DejaVu Sans Condensed','DejaVu Sans','Liberation Sans',sans-serif;letter-spacing:-0.14px;left:213.80px;">HSI_DEV</div>
<div class="t " style="top:197px;font-size:4.3px;line-height:5px;color:#333;font-family:'DejaVu Sans Condensed','DejaVu Sans','Liberation Sans',sans-serif;letter-spacing:-0.14px;left:278.90px;">APO0000001484</div>
<div class="t " style="top:197px;font-size:4.3px;line-height:5px;color:#333;font-family:'DejaVu Sans Condensed','DejaVu Sans','Liberation Sans',sans-serif;letter-spacing:-0.14px;left:340.30px;">1</div>
<div class="t " style="top:197px;font-size:4.3px;line-height:5px;color:#333;font-family:'DejaVu Sans Condensed','DejaVu Sans','Liberation Sans',sans-serif;letter-spacing:-0.14px;left:390.10px;">GRNWDGT</div>
<div class="t " style="top:197px;font-size:4.3px;line-height:5px;color:#333;font-family:'DejaVu Sans Condensed','DejaVu Sans','Liberation Sans',sans-serif;letter-spacing:-0.14px;left:463.40px;">125.0000</div>
<div class="t " style="top:197px;font-size:4.3px;line-height:5px;color:#333;font-family:'DejaVu Sans Condensed','DejaVu Sans','Liberation Sans',sans-serif;letter-spacing:-0.14px;left:554.70px;">1.0000</div>
<div class="t " style="top:197px;font-size:4.3px;line-height:5px;color:#333;font-family:'DejaVu Sans Condensed','DejaVu Sans','Liberation Sans',sans-serif;letter-spacing:-0.14px;left:615.50px;">EA</div>
<div class="t " style="top:197px;font-size:4.3px;line-height:5px;color:#333;font-family:'DejaVu Sans Condensed','DejaVu Sans','Liberation Sans',sans-serif;letter-spacing:-0.14px;left:652.20px;">125.0000</div>
<div class="t " style="top:205px;font-size:4.3px;line-height:5px;color:#333;font-family:'DejaVu Sans Condensed','DejaVu Sans','Liberation Sans',sans-serif;letter-spacing:-0.14px;left:153.70px;">1499</div>
<div class="t " style="top:205px;font-size:4.3px;line-height:5px;color:#333;font-family:'DejaVu Sans Condensed','DejaVu Sans','Liberation Sans',sans-serif;letter-spacing:-0.14px;left:213.80px;">HSI_DEV</div>
<div class="t " style="top:205px;font-size:4.3px;line-height:5px;color:#333;font-family:'DejaVu Sans Condensed','DejaVu Sans','Liberation Sans',sans-serif;letter-spacing:-0.14px;left:278.90px;">APO0000001484</div>
<div class="t " style="top:205px;font-size:4.3px;line-height:5px;color:#333;font-family:'DejaVu Sans Condensed','DejaVu Sans','Liberation Sans',sans-serif;letter-spacing:-0.14px;left:340.30px;">2</div>
<div class="t " style="top:205px;font-size:4.3px;line-height:5px;color:#333;font-family:'DejaVu Sans Condensed','DejaVu Sans','Liberation Sans',sans-serif;letter-spacing:-0.14px;left:390.10px;">ORNWDGT</div>
<div class="t " style="top:205px;font-size:4.3px;line-height:5px;color:#333;font-family:'DejaVu Sans Condensed','DejaVu Sans','Liberation Sans',sans-serif;letter-spacing:-0.14px;left:463.40px;">5.0000</div>
<div class="t " style="top:205px;font-size:4.3px;line-height:5px;color:#333;font-family:'DejaVu Sans Condensed','DejaVu Sans','Liberation Sans',sans-serif;letter-spacing:-0.14px;left:554.70px;">1.7500</div>
<div class="t " style="top:205px;font-size:4.3px;line-height:5px;color:#333;font-family:'DejaVu Sans Condensed','DejaVu Sans','Liberation Sans',sans-serif;letter-spacing:-0.14px;left:615.50px;">EA</div>
<div class="t " style="top:205px;font-size:4.3px;line-height:5px;color:#333;font-family:'DejaVu Sans Condensed','DejaVu Sans','Liberation Sans',sans-serif;letter-spacing:-0.14px;left:652.20px;">8.7500</div>
<div class="t " style="top:212px;font-size:4.3px;line-height:5px;color:#333;font-family:'DejaVu Sans Condensed','DejaVu Sans','Liberation Sans',sans-serif;letter-spacing:-0.14px;left:153.70px;">1500</div>
<div class="t " style="top:212px;font-size:4.3px;line-height:5px;color:#333;font-family:'DejaVu Sans Condensed','DejaVu Sans','Liberation Sans',sans-serif;letter-spacing:-0.14px;left:213.80px;">HSI_DEV</div>
<div class="t " style="top:212px;font-size:4.3px;line-height:5px;color:#333;font-family:'DejaVu Sans Condensed','DejaVu Sans','Liberation Sans',sans-serif;letter-spacing:-0.14px;left:278.90px;">APO0000001484</div>
<div class="t " style="top:212px;font-size:4.3px;line-height:5px;color:#333;font-family:'DejaVu Sans Condensed','DejaVu Sans','Liberation Sans',sans-serif;letter-spacing:-0.14px;left:340.30px;">3</div>
<div class="t " style="top:212px;font-size:4.3px;line-height:5px;color:#333;font-family:'DejaVu Sans Condensed','DejaVu Sans','Liberation Sans',sans-serif;letter-spacing:-0.14px;left:390.10px;">PNKWDGT</div>
<div class="t " style="top:212px;font-size:4.3px;line-height:5px;color:#333;font-family:'DejaVu Sans Condensed','DejaVu Sans','Liberation Sans',sans-serif;letter-spacing:-0.14px;left:463.40px;">4.0000</div>
<div class="t " style="top:212px;font-size:4.3px;line-height:5px;color:#333;font-family:'DejaVu Sans Condensed','DejaVu Sans','Liberation Sans',sans-serif;letter-spacing:-0.14px;left:554.70px;">50.0000</div>
<div class="t " style="top:212px;font-size:4.3px;line-height:5px;color:#333;font-family:'DejaVu Sans Condensed','DejaVu Sans','Liberation Sans',sans-serif;letter-spacing:-0.14px;left:615.50px;">EA</div>
<div class="t " style="top:212px;font-size:4.3px;line-height:5px;color:#333;font-family:'DejaVu Sans Condensed','DejaVu Sans','Liberation Sans',sans-serif;letter-spacing:-0.14px;left:652.20px;">200.0000</div>
<div class="t " style="top:219px;font-size:4.3px;line-height:5px;color:#333;font-family:'DejaVu Sans Condensed','DejaVu Sans','Liberation Sans',sans-serif;letter-spacing:-0.14px;left:153.70px;">1501</div>
<div class="t " style="top:219px;font-size:4.3px;line-height:5px;color:#333;font-family:'DejaVu Sans Condensed','DejaVu Sans','Liberation Sans',sans-serif;letter-spacing:-0.14px;left:213.80px;">HSI_DEV</div>
<div class="t " style="top:219px;font-size:4.3px;line-height:5px;color:#333;font-family:'DejaVu Sans Condensed','DejaVu Sans','Liberation Sans',sans-serif;letter-spacing:-0.14px;left:278.90px;">APO0000001484</div>
<div class="t " style="top:219px;font-size:4.3px;line-height:5px;color:#333;font-family:'DejaVu Sans Condensed','DejaVu Sans','Liberation Sans',sans-serif;letter-spacing:-0.14px;left:340.30px;">4</div>
<div class="t " style="top:219px;font-size:4.3px;line-height:5px;color:#333;font-family:'DejaVu Sans Condensed','DejaVu Sans','Liberation Sans',sans-serif;letter-spacing:-0.14px;left:390.10px;">PRPWDGT</div>
<div class="t " style="top:219px;font-size:4.3px;line-height:5px;color:#333;font-family:'DejaVu Sans Condensed','DejaVu Sans','Liberation Sans',sans-serif;letter-spacing:-0.14px;left:463.40px;">4.0000</div>
<div class="t " style="top:219px;font-size:4.3px;line-height:5px;color:#333;font-family:'DejaVu Sans Condensed','DejaVu Sans','Liberation Sans',sans-serif;letter-spacing:-0.14px;left:554.70px;">2.5000</div>
<div class="t " style="top:219px;font-size:4.3px;line-height:5px;color:#333;font-family:'DejaVu Sans Condensed','DejaVu Sans','Liberation Sans',sans-serif;letter-spacing:-0.14px;left:615.50px;">EA</div>
<div class="t " style="top:219px;font-size:4.3px;line-height:5px;color:#333;font-family:'DejaVu Sans Condensed','DejaVu Sans','Liberation Sans',sans-serif;letter-spacing:-0.14px;left:652.20px;">10.0000</div>
<div class="t " style="top:226px;font-size:4.3px;line-height:5px;color:#333;font-family:'DejaVu Sans Condensed','DejaVu Sans','Liberation Sans',sans-serif;letter-spacing:-0.14px;left:153.70px;">1536</div>
<div class="t " style="top:226px;font-size:4.3px;line-height:5px;color:#333;font-family:'DejaVu Sans Condensed','DejaVu Sans','Liberation Sans',sans-serif;letter-spacing:-0.14px;left:213.80px;">HSI_DEV</div>
<div class="t " style="top:226px;font-size:4.3px;line-height:5px;color:#333;font-family:'DejaVu Sans Condensed','DejaVu Sans','Liberation Sans',sans-serif;letter-spacing:-0.14px;left:278.90px;">APO0000001523</div>
<div class="t " style="top:226px;font-size:4.3px;line-height:5px;color:#333;font-family:'DejaVu Sans Condensed','DejaVu Sans','Liberation Sans',sans-serif;letter-spacing:-0.14px;left:340.30px;">1</div>
<div class="t " style="top:226px;font-size:4.3px;line-height:5px;color:#333;font-family:'DejaVu Sans Condensed','DejaVu Sans','Liberation Sans',sans-serif;letter-spacing:-0.14px;left:390.10px;">GRNWDGT</div>
<div class="t " style="top:226px;font-size:4.3px;line-height:5px;color:#333;font-family:'DejaVu Sans Condensed','DejaVu Sans','Liberation Sans',sans-serif;letter-spacing:-0.14px;left:463.40px;">125.0000</div>
<div class="t " style="top:226px;font-size:4.3px;line-height:5px;color:#333;font-family:'DejaVu Sans Condensed','DejaVu Sans','Liberation Sans',sans-serif;letter-spacing:-0.14px;left:554.70px;">1.0000</div>
<div class="t " style="top:226px;font-size:4.3px;line-height:5px;color:#333;font-family:'DejaVu Sans Condensed','DejaVu Sans','Liberation Sans',sans-serif;letter-spacing:-0.14px;left:615.50px;">EA</div>
<div class="t " style="top:226px;font-size:4.3px;line-height:5px;color:#333;font-family:'DejaVu Sans Condensed','DejaVu Sans','Liberation Sans',sans-serif;letter-spacing:-0.14px;left:652.20px;">125.0000</div>
<div class="t " style="top:233px;font-size:4.3px;line-height:5px;color:#333;font-family:'DejaVu Sans Condensed','DejaVu Sans','Liberation Sans',sans-serif;letter-spacing:-0.14px;left:153.70px;">1537</div>
<div class="t " style="top:233px;font-size:4.3px;line-height:5px;color:#333;font-family:'DejaVu Sans Condensed','DejaVu Sans','Liberation Sans',sans-serif;letter-spacing:-0.14px;left:213.80px;">HSI_DEV</div>
<div class="t " style="top:233px;font-size:4.3px;line-height:5px;color:#333;font-family:'DejaVu Sans Condensed','DejaVu Sans','Liberation Sans',sans-serif;letter-spacing:-0.14px;left:278.90px;">APO0000001523</div>
<div class="t " style="top:233px;font-size:4.3px;line-height:5px;color:#333;font-family:'DejaVu Sans Condensed','DejaVu Sans','Liberation Sans',sans-serif;letter-spacing:-0.14px;left:340.30px;">2</div>
<div class="t " style="top:233px;font-size:4.3px;line-height:5px;color:#333;font-family:'DejaVu Sans Condensed','DejaVu Sans','Liberation Sans',sans-serif;letter-spacing:-0.14px;left:390.10px;">PNKWDGT</div>
<div class="t " style="top:233px;font-size:4.3px;line-height:5px;color:#333;font-family:'DejaVu Sans Condensed','DejaVu Sans','Liberation Sans',sans-serif;letter-spacing:-0.14px;left:463.40px;">4.0000</div>
<div class="t " style="top:233px;font-size:4.3px;line-height:5px;color:#333;font-family:'DejaVu Sans Condensed','DejaVu Sans','Liberation Sans',sans-serif;letter-spacing:-0.14px;left:554.70px;">50.0000</div>
<div class="t " style="top:233px;font-size:4.3px;line-height:5px;color:#333;font-family:'DejaVu Sans Condensed','DejaVu Sans','Liberation Sans',sans-serif;letter-spacing:-0.14px;left:615.50px;">EA</div>
<div class="t " style="top:233px;font-size:4.3px;line-height:5px;color:#333;font-family:'DejaVu Sans Condensed','DejaVu Sans','Liberation Sans',sans-serif;letter-spacing:-0.14px;left:652.20px;">200.0000</div>
<div class="t " style="top:240px;font-size:4.3px;line-height:5px;color:#333;font-family:'DejaVu Sans Condensed','DejaVu Sans','Liberation Sans',sans-serif;letter-spacing:-0.14px;left:153.70px;">1538</div>
<div class="t " style="top:240px;font-size:4.3px;line-height:5px;color:#333;font-family:'DejaVu Sans Condensed','DejaVu Sans','Liberation Sans',sans-serif;letter-spacing:-0.14px;left:213.80px;">HSI_DEV</div>
<div class="t " style="top:240px;font-size:4.3px;line-height:5px;color:#333;font-family:'DejaVu Sans Condensed','DejaVu Sans','Liberation Sans',sans-serif;letter-spacing:-0.14px;left:278.90px;">APO0000001523</div>
<div class="t " style="top:240px;font-size:4.3px;line-height:5px;color:#333;font-family:'DejaVu Sans Condensed','DejaVu Sans','Liberation Sans',sans-serif;letter-spacing:-0.14px;left:340.30px;">3</div>
<div class="t " style="top:240px;font-size:4.3px;line-height:5px;color:#333;font-family:'DejaVu Sans Condensed','DejaVu Sans','Liberation Sans',sans-serif;letter-spacing:-0.14px;left:390.10px;">TNLWDGT</div>
<div class="t " style="top:240px;font-size:4.3px;line-height:5px;color:#333;font-family:'DejaVu Sans Condensed','DejaVu Sans','Liberation Sans',sans-serif;letter-spacing:-0.14px;left:463.40px;">3.0000</div>
<div class="t " style="top:240px;font-size:4.3px;line-height:5px;color:#333;font-family:'DejaVu Sans Condensed','DejaVu Sans','Liberation Sans',sans-serif;letter-spacing:-0.14px;left:554.70px;">9.9900</div>
<div class="t " style="top:240px;font-size:4.3px;line-height:5px;color:#333;font-family:'DejaVu Sans Condensed','DejaVu Sans','Liberation Sans',sans-serif;letter-spacing:-0.14px;left:615.50px;">EA</div>
<div class="t " style="top:240px;font-size:4.3px;line-height:5px;color:#333;font-family:'DejaVu Sans Condensed','DejaVu Sans','Liberation Sans',sans-serif;letter-spacing:-0.14px;left:652.20px;">29.9700</div>
<div class="t " style="top:402px;font-size:4.45px;line-height:5px;color:#222;letter-spacing:-0.007px;left:152.60px;">AP Accruals: Receipts without Invoice Coding Forms</div>
<svg style="left:26.70px;top:415.25px;" width="6.40" height="6.40" viewBox="0 0 20 20"><path d="M1 3.500 8.500 2.400V9.500H1zM9.700 2.200 19 1v8.500H9.700zM1 10.600h7.500v7L1 16.500zM9.700 10.600H19V19l-9.300-1.300z" fill="#fff"/></svg>
<svg style="left:44.50px;top:415.15px;" width="6.60" height="6.60" viewBox="0 0 20 20"><circle cx="12" cy="8" r="5.500" fill="none" stroke="#fff" stroke-width="1.800"/><path d="M8 12 2 18" stroke="#fff" stroke-width="2"/></svg>
<svg style="left:62.30px;top:415.15px;" width="6.60" height="6.60" viewBox="0 0 20 20"><rect x="4" y="4" width="12" height="12" fill="none" stroke="#fff" stroke-width="1.600"/><path d="M1.500 3v14M18.500 3v14M4 10h12" stroke="#fff" stroke-width="1.500"/></svg>
<svg style="left:80.90px;top:413.95px;" width="9.00" height="9.00" viewBox="0 0 20 20"><text x="10.500" y="17.500" font-size="27" font-weight="bold" fill="#3db4f2" text-anchor="middle" font-family="Liberation Sans,sans-serif">e</text><path d="M1.500 14.500C1 6 12 0.500 19.500 4.500" fill="none" stroke="#f4c531" stroke-width="2.200"/></svg>
<svg style="left:99.60px;top:414.25px;" width="8.40" height="8.40" viewBox="0 0 20 20"><path d="M1 3.500h7l2 2h9v12H1z" fill="#f2bf3c"/><rect x="1" y="7" width="18" height="10.500" fill="#fcdc72"/><rect x="5.500" y="11" width="9" height="6.500" fill="#3f9be6"/><rect x="8" y="14.500" width="4" height="3" fill="#fcdc72"/></svg>
<svg style="left:117.65px;top:414.30px;" width="8.30" height="8.30" viewBox="0 0 20 20"><circle cx="10" cy="10" r="9.500" fill="#e33b2e"/><path d="M10 10 1.800 14.700A9.500 9.500 0 0 0 10 19.500l4.200-7.200z" fill="#2da94f"/><path d="M10 10h9.500a9.500 9.500 0 0 1-9.500 9.500l4.200-7.200z" fill="#fbbc05"/><circle cx="10" cy="10" r="4.400" fill="#fff"/><circle cx="10" cy="10" r="3.400" fill="#4285f4"/></svg>
<svg style="left:135.65px;top:413.90px;" width="9.10" height="9.10" viewBox="0 0 20 20"><circle cx="10" cy="10" r="9.700" fill="#f6fbfb"/><path d="M5 4.200a7.500 7.500 0 0 1 10 0z" fill="#9fdcc0"/><path d="M5 15.800a7.500 7.500 0 0 0 10 0z" fill="#9fdde8"/><rect x="2.500" y="8.600" width="15" height="2.900" rx="0.800" fill="#25657e"/></svg>
<svg style="left:154.30px;top:414.25px;" width="8.40" height="8.40" viewBox="0 0 20 20"><rect x="1.500" y="1" width="17" height="18" fill="#18b4d8"/><rect x="4" y="5" width="12" height="11.500" fill="#f2fcfe"/><path d="M6 11l3 3 5-6.500" fill="none" stroke="#2a9a48" stroke-width="2"/></svg>
<svg style="left:172.80px;top:414.25px;" width="8.40" height="8.40" viewBox="0 0 20 20"><rect x="1" y="2.500" width="18" height="15" fill="#dfe9f5"/><rect x="5.500" y="6.500" width="9.500" height="8" fill="#1d6fd0"/><rect x="1" y="2.500" width="18" height="2.500" fill="#f6f9fc"/></svg>
<svg style="left:190.80px;top:414.15px;" width="8.60" height="8.60" viewBox="0 0 20 20"><rect x="1" y="2.500" width="18" height="15" fill="#0c0c0c" stroke="#a8a8a8" stroke-width="1.200"/><rect x="1" y="2.500" width="18" height="2.400" fill="#d8d8d8"/><path d="M3.500 8h5" stroke="#ddd" stroke-width="1.400"/></svg>
<svg style="left:209.50px;top:414.15px;" width="8.60" height="8.60" viewBox="0 0 20 20"><path d="M4 1h9l3.500 3.500V19H4z" fill="#f4c430"/><path d="M8.500 8.500l8.500 10M17 8.500 8.500 18.500" stroke="#1c62c4" stroke-width="2.400"/><path d="M1.500 10.500v8h6" fill="none" stroke="#2a9a48" stroke-width="2.200"/><path d="M13.500 1.500h5v5" fill="none" stroke="#2a9a48" stroke-width="2"/></svg>
<svg style="left:227.70px;top:413.95px;" width="9.00" height="9.00" viewBox="0 0 20 20"><circle cx="10" cy="10" r="9.700" fill="#dff3f6"/><circle cx="10" cy="10" r="6.400" fill="#2d8aa0"/><circle cx="10" cy="10" r="3.200" fill="#e8f7fa"/><rect x="3.500" y="8.800" width="13" height="2.400" fill="#1d6f86"/></svg>
<svg style="left:246.00px;top:413.95px;" width="9.00" height="9.00" viewBox="0 0 20 20"><circle cx="10" cy="10" r="9.700" fill="#e2f5e6"/><circle cx="10" cy="10" r="6.400" fill="#38a356"/><circle cx="10" cy="10" r="3.200" fill="#eefaf0"/><rect x="3.500" y="8.800" width="13" height="2.400" fill="#2a8a48"/></svg>
<div class="t " style="top:416px;font-size:4.45px;line-height:5px;color:#f2f2f2;letter-spacing:-0.004px;left:645.90px;">Desktop</div>
<div class="t " style="top:412px;font-size:4.45px;line-height:5px;color:#f2f2f2;left:566.80px;width:200px;text-align:center;">»</div>
<svg style="left:672.00px;top:416.60px;" width="4.80" height="3.00" viewBox="0 0 12 8"><path d="M1 7 6 1.500 11 7" fill="none" stroke="#fff" stroke-width="1.600"/></svg>
<svg style="left:680.60px;top:415.20px;" width="6.20" height="6.00" viewBox="0 0 16 16"><rect x="3" y="2" width="12" height="8" fill="none" stroke="#fff" stroke-width="1.500"/><path d="M1 6v8h6M9 10v3M6 13.500h6" stroke="#fff" stroke-width="1.400" fill="none"/></svg>
<svg style="left:688.40px;top:415.00px;" width="7.40" height="6.60" viewBox="0 0 18 16"><path d="M1.500 6h3l4-4v12l-4-4h-3z" fill="none" stroke="#fff" stroke-width="1.400"/><circle cx="14" cy="12" r="3.900" fill="#ee1f2e"/></svg>
<div class="t " style="top:412px;font-size:4.45px;line-height:5px;color:#f2f2f2;letter-spacing:-0.125px;left:699.70px;">10:27 AM</div>
<div class="t " style="top:419px;font-size:4.45px;line-height:5px;color:#f2f2f2;letter-spacing:-0.266px;left:699.90px;">8/26/2022</div>
<svg style="left:725.80px;top:415.00px;" width="8.80" height="8.40" viewBox="0 0 20 19"><path d="M1.500 1.500h12v9h-7l-2.500 2.500v-2.500h-2.500z" fill="#fff"/><path d="M4 4.500h7M4 7.500h5" stroke="#000" stroke-width="1.200"/><circle cx="13.500" cy="13" r="4.800" fill="#000" stroke="#ddd" stroke-width="1.200"/><path d="M13.500 10.500v5" stroke="#fff" stroke-width="1.400"/></svg>
</div>
</body></html>
